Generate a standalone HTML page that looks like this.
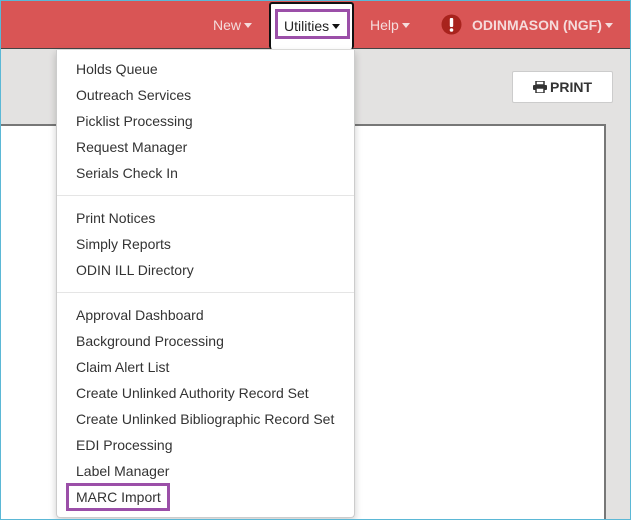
<!DOCTYPE html><html style="width:631px;height:520px;overflow:hidden"><head><style>
*{margin:0;padding:0;box-sizing:border-box}
body{width:631px;height:520px;overflow:hidden;font-family:"Liberation Sans",sans-serif;background:#e3e2e1;position:relative}
.frame{position:absolute;inset:0;border:1px solid #5bb8d6;z-index:20;pointer-events:none}
.hdr{position:absolute;left:0;top:0;width:631px;height:49px;background:#d95555;border-bottom:1px solid #444}
.nav{position:absolute;top:17px;color:#f5dcdc;font-size:14px}
.car{display:inline-block;width:0;height:0;border-left:4px solid transparent;border-right:4px solid transparent;border-top:5px solid currentColor;vertical-align:2px;margin-left:3px}
.util{position:absolute;left:269px;top:2px;width:85px;height:47px;background:#fff;border:2px solid #111;border-radius:3px;border-bottom:none}
.util .pb{position:absolute;left:4px;top:5px;width:75px;height:30px;border:3px solid #9b4fa8}
.util .lb{position:absolute;left:13px;top:14px;font-size:14px;color:#222;white-space:nowrap}
.panel{position:absolute;left:1px;top:124px;width:605px;height:396px;background:#fff;border-top:2px solid #777;border-right:2px solid #777}
.print{position:absolute;left:512px;top:71px;width:101px;height:32px;background:#fff;border:1px solid #ccc;border-radius:2px;font-weight:bold;font-size:14px;color:#333;text-align:center;line-height:31px}
.dd{position:absolute;left:56px;top:50px;width:299px;height:468px;background:#fff;border:1px solid #ccc;border-top:none;border-radius:0 0 4px 4px;box-shadow:0 3px 8px rgba(0,0,0,.2);z-index:5}
.it{position:absolute;left:19px;font-size:14px;color:#333}
.dv{position:absolute;left:0;width:297px;height:1px;background:#e5e5e5}
.mb{position:absolute;left:9px;top:433px;width:104px;height:28px;border:3px solid #9b4fa8}
</style></head><body>
<div class="hdr"></div>
<div class="nav" style="left:213px">New<span class="car"></span></div>
<div class="util"><div class="pb"></div><div class="lb">Utilities<span class="car" style="color:#111"></span></div></div>
<div class="nav" style="left:370px">Help<span class="car"></span></div>
<svg style="position:absolute;left:441px;top:14px" width="21" height="21"><circle cx="10.5" cy="10.5" r="10" fill="#a8231d"/><rect x="8.8" y="4" width="3.4" height="9" rx="1" fill="#fff"/><circle cx="10.5" cy="16" r="1.8" fill="#fff"/></svg>
<div class="nav" style="left:472px;font-weight:bold">ODINMASON (NGF)<span class="car"></span></div>
<div class="print"><svg width="14" height="12" style="vertical-align:-1px;margin-right:3px" viewBox="0 0 14 12"><rect x="3" y="0" width="8" height="4" fill="none" stroke="#333" stroke-width="1.5"/><rect x="0" y="4" width="14" height="5" rx="1" fill="#333"/><rect x="3" y="7" width="8" height="5" fill="#fff" stroke="#333" stroke-width="1.5"/></svg>PRINT</div>
<div class="panel"></div>
<div class="dd">
<div class="it" style="top:11px">Holds Queue</div>
<div class="it" style="top:37px">Outreach Services</div>
<div class="it" style="top:63px">Picklist Processing</div>
<div class="it" style="top:89px">Request Manager</div>
<div class="it" style="top:115px">Serials Check In</div>
<div class="dv" style="top:145px"></div>
<div class="it" style="top:160px">Print Notices</div>
<div class="it" style="top:186px">Simply Reports</div>
<div class="it" style="top:212px">ODIN ILL Directory</div>
<div class="dv" style="top:242px"></div>
<div class="it" style="top:257px">Approval Dashboard</div>
<div class="it" style="top:283px">Background Processing</div>
<div class="it" style="top:309px">Claim Alert List</div>
<div class="it" style="top:335px">Create Unlinked Authority Record Set</div>
<div class="it" style="top:361px">Create Unlinked Bibliographic Record Set</div>
<div class="it" style="top:387px">EDI Processing</div>
<div class="it" style="top:413px">Label Manager</div>
<div class="it" style="top:439px">MARC Import</div>
<div class="mb"></div>
</div>
<div class="frame"></div>
</body></html>
